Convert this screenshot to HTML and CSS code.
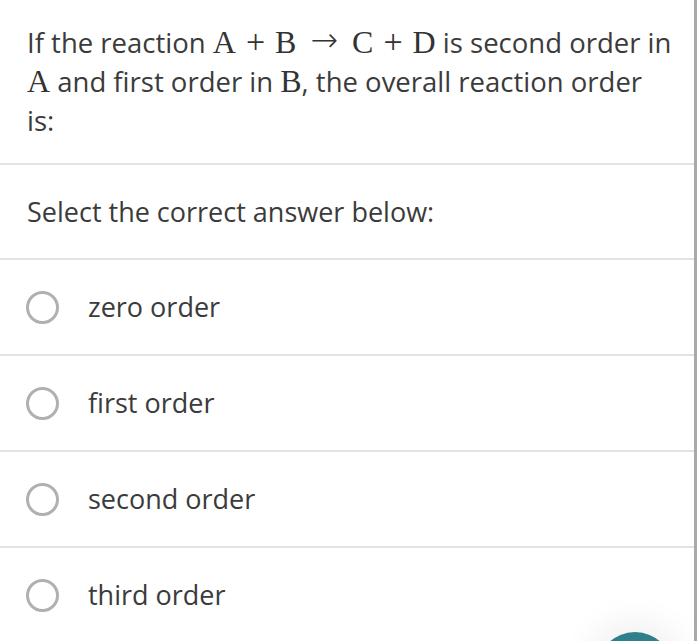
FILE: index.html
```html
<!DOCTYPE html>
<html>
<head>
<meta charset="utf-8">
<link rel="stylesheet" href="styles.css">
</head>
<body>
<div class="page">
  <div class="question">
    If the reaction <span class="math">A<span class="bin">+</span>B<span class="rel">→</span>C<span class="bin">+</span>D</span> is second order in<br><span class="math">A</span> and first order in <span class="math">B</span>, the overall reaction order<br>is:
  </div>
  <div class="prompt">Select the correct answer below:</div>
  <div class="option"><span class="radio"></span><span class="label">zero order</span></div>
  <div class="option"><span class="radio"></span><span class="label">first order</span></div>
  <div class="option"><span class="radio"></span><span class="label">second order</span></div>
  <div class="option"><span class="radio"></span><span class="label">third order</span></div>
  <div class="fab"></div>
</div>
</body>
</html>
```

FILE: styles.css
```css
html, body {
  margin: 0;
  padding: 0;
  background: #ffffff;
}
body {
  width: 700px;
  height: 641px;
  overflow: hidden;
  font-family: "Open Sans", "Noto Sans", sans-serif;
  color: #3b3b3b;
}
.page {
  position: relative;
  width: 694px;
  height: 641px;
  border-right: 3px solid #a9a9a9;
  overflow: hidden;
}
.question {
  font-size: 27.5px;
  line-height: 39px;
  padding: 22px 10px 24px 27px;
  height: 117px;
  white-space: nowrap;
  border-bottom: 2px solid #e3e3e3;
}
.math {
  font-family: "Liberation Serif", "Times New Roman", serif;
  font-size: 32px;
  color: #333;
}
.bin {
  margin: 0 10px;
  font-size: 34px;
}
.rel {
  font-family: "DejaVu Sans", sans-serif;
  font-weight: 200;
  font-size: 33px;
  margin: 0 14px;
  position: relative;
  top: -2px;
}
.prompt {
  font-size: 27px;
  height: 93px;
  padding-left: 27px;
  display: flex;
  align-items: center;
  border-bottom: 2px solid #e3e3e3;
}
.option {
  height: 94px;
  display: flex;
  align-items: center;
  padding-left: 26px;
  border-bottom: 2px solid #e3e3e3;
  font-size: 27px;
}
.radio {
  width: 27px;
  height: 27px;
  border: 3px solid #b0b0b0;
  border-radius: 50%;
  flex: none;
}
.label {
  margin-left: 29px;
  margin-bottom: 2px;
}
.fab {
  position: absolute;
  left: 597px;
  top: 632px;
  width: 76px;
  height: 76px;
  border-radius: 50%;
  background: #2f7f8c;
  box-shadow: 0 0 30px 14px rgba(0, 0, 0, 0.05);
}
```
